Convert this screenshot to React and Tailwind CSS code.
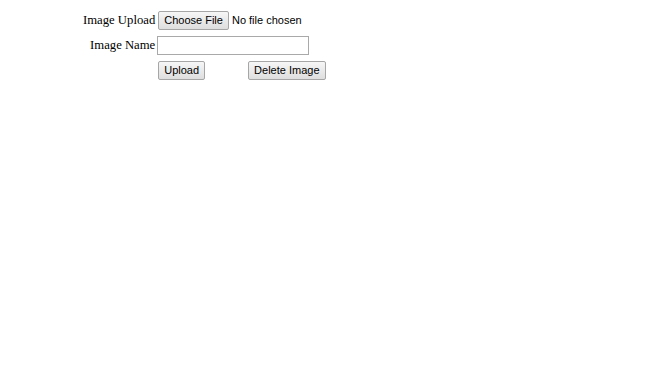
const btn =
  "h-[19px] px-[5px] whitespace-nowrap border border-[#a6a6a6] rounded-[2px] bg-gradient-to-b from-[#f6f6f6] to-[#dedede] text-[11px] leading-none text-black [font-family:'Liberation_Sans',Arial,sans-serif]";

const App = () => {
  return (
    <div className="min-h-[365px] bg-white pl-[81px] pt-[11px] [font-family:'Liberation_Serif','Times_New_Roman',serif] text-[12.7px] text-black">
      <table className="border-separate border-spacing-x-[2px] border-spacing-y-[6px] -mt-[6px]">
        <tbody>
          <tr>
            <td className="text-right align-middle whitespace-nowrap">Image Upload</td>
            <td className="align-middle">
              <div className="flex items-center">
                <button className={`${btn} ml-[1px]`}>Choose File</button>
                <span className="ml-[3px] whitespace-nowrap text-[11px] [font-family:'Liberation_Sans',Arial,sans-serif]">
                  No file chosen
                </span>
              </div>
            </td>
          </tr>
          <tr>
            <td className="text-right align-middle whitespace-nowrap">Image Name</td>
            <td className="align-middle">
              <input
                type="text"
                className="block w-[152px] h-[19px] border border-[#a9a9a9] bg-white outline-none"
              />
            </td>
          </tr>
          <tr>
            <td></td>
            <td>
              <div className="flex items-center">
                <button className={`${btn} ml-[1px]`}>Upload</button>
                <button className={`${btn} ml-[43px]`}>Delete Image</button>
              </div>
            </td>
          </tr>
        </tbody>
      </table>
    </div>
  );
};

export default App;
